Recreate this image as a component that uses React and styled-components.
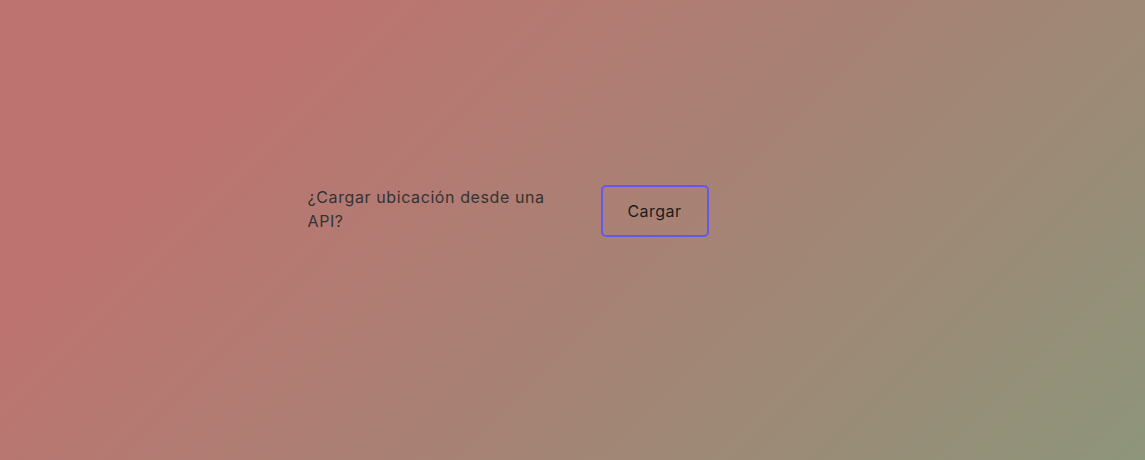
import React from 'react';
import styled, { createGlobalStyle } from 'styled-components';

const Global = createGlobalStyle`
  html, body {
    margin: 0;
    padding: 0;
  }
  body {
    font-family: Inter, "Noto Sans", sans-serif;
  }
`;

const S = {
  Page: styled.main`
    width: 100%;
    min-height: 460px;
    box-sizing: border-box;
    padding-top: 185px;
    background: linear-gradient(135deg, #bd7370 20%, #8d957a 100%);
    display: flex;
    justify-content: center;
  `,
  Row: styled.section`
    width: 530px;
    display: flex;
    align-items: flex-start;
    gap: 33px;
  `,
  Question: styled.p`
    margin: 0;
    width: 260px;
    font-size: 16px;
    line-height: 24px;
    letter-spacing: 0.6px;
    color: #333333;
  `,
  Button: styled.button`
    width: 108px;
    height: 52px;
    box-sizing: border-box;
    border: 2px solid #6457ee;
    border-radius: 5px;
    background: transparent;
    font-family: inherit;
    font-size: 16px;
    letter-spacing: 0.5px;
    color: #1c1c1c;
    cursor: pointer;
  `,
};

const App = () => {
  return (
    <>
      <Global />
      <S.Page>
        <S.Row>
          <S.Question>¿Cargar ubicación desde una API?</S.Question>
          <S.Button>Cargar</S.Button>
        </S.Row>
      </S.Page>
    </>
  );
};

export default App;
